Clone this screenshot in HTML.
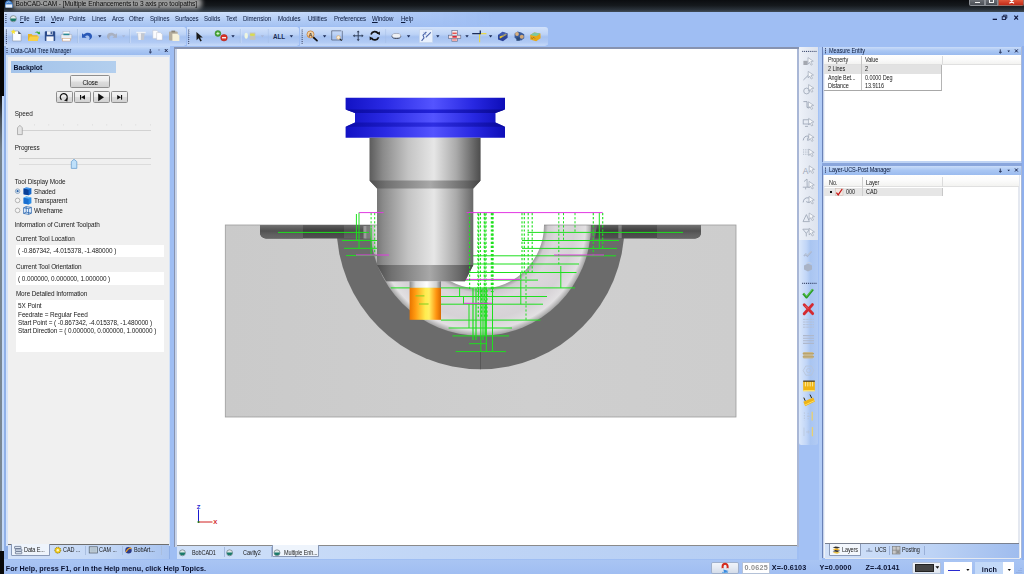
<!DOCTYPE html>
<html lang="en">
<head>
<meta charset="utf-8">
<title>BobCAD-CAM - [Multiple Enhancements to 3 axis pro toolpaths]</title>
<style>
*{box-sizing:border-box;margin:0;padding:0}
html,body{width:1024px;height:574px;overflow:hidden}
body{position:relative;background:#9fbef3;font-family:"Liberation Sans",sans-serif;font-size:6.5px;color:#111;line-height:1}
.a{position:absolute}
.t{position:absolute;white-space:nowrap;letter-spacing:-0.1px;filter:blur(.28px)}
/* title bar */
#title{left:0;top:0;width:1024px;height:11.700px;background:linear-gradient(#0b0d10 0,#15191d 45%,#2a323a 80%,#414c57 100%)}
#titletxt{left:15.500px;top:.8px;font-size:6.600px;letter-spacing:-0.09px;color:#0c0c0c}
#tglow{left:12px;top:-3px;width:190px;height:11.500px;border-radius:5px;background:#b4b4b4;filter:blur(2.200px);opacity:.85}
/* menu */
#menubar{left:4px;top:11.700px;width:1020px;height:14.800px;background:linear-gradient(90deg,rgba(159,190,243,0),rgba(159,190,243,0) 25%,#9fbef3 48%),linear-gradient(#cfe0fb,#b6cff6 55%,#a6c3f2)}
#menubar .t{top:4.600px;font-size:6.600px;color:#0c1a3c;display:inline-block;transform:scaleX(.93);transform-origin:0 50%}
#menubar u{text-decoration-thickness:.5px;text-underline-offset:.6px}
/* toolbar */
.tbg{background:linear-gradient(#d2e2fb,#bdd3f6 40%,#a6c2f1 55%,#b1caf4 85%,#c3d7f8);box-shadow:0 .6px 0 #e4eefc}
/* panels */
.phead{height:9px;background:linear-gradient(#c9dcf9,#a9c6f3 50%,#9bbbef);font-size:6.3px;color:#0c1a3c}
.phead .t{top:1.5px}
.b{font-weight:bold}
.f{margin-top:.6px;font-size:6.4px;letter-spacing:-0.09px;color:#1a1a1a}
.btn{border:.8px solid #8e8e8e;border-radius:1.6px;background:linear-gradient(#f4f4f4,#ebebeb 48%,#dddddd 52%,#d2d2d2)}
.h{font-size:6.400px;display:inline-block;transform:scaleX(.87);transform-origin:0 50%;color:#0c1a3c;top:1.100px}
.g{font-size:6.400px;display:inline-block;transform:scaleX(.86);transform-origin:0 50%;color:#1a1a1a}
.s{font-size:7.200px;font-weight:bold;color:#0a1230;letter-spacing:.12px}
.arr{width:4px;height:2.500px;background:#111;clip-path:polygon(0 0,100% 0,50% 100%)}
</style>
</head>
<body>
<!-- title bar -->
<div id="title" class="a"></div>
<div class="a" style="left:0;top:0;width:4px;height:96px;background:#050505"></div>
<div class="a" style="left:0;top:96px;width:1.5px;height:455px;background:linear-gradient(#111,#4a545e 5%,#76848f 12%,#7b8995)"></div>
<div class="a" style="left:1.5px;top:96px;width:2.5px;height:455px;background:#c3d9f8"></div>
<div class="a" style="left:0;top:551px;width:4px;height:23px;background:#0a0a0a"></div>
<div id="tglow" class="a"></div>
<div id="titletxt" class="t">BobCAD-CAM - [Multiple Enhancements to 3 axis pro toolpaths]</div>

<!-- menu bar -->
<div id="menubar" class="a">
<span class="t" style="left:16px"><u>F</u>ile</span>
<span class="t" style="left:31px"><u>E</u>dit</span>
<span class="t" style="left:47px"><u>V</u>iew</span>
<span class="t" style="left:65px">Points</span>
<span class="t" style="left:88px">Lines</span>
<span class="t" style="left:108px">Arcs</span>
<span class="t" style="left:125px">Other</span>
<span class="t" style="left:146px">Splines</span>
<span class="t" style="left:171px">Surfaces</span>
<span class="t" style="left:200px">Solids</span>
<span class="t" style="left:222px">Text</span>
<span class="t" style="left:239px">Dimension</span>
<span class="t" style="left:274px">Modules</span>
<span class="t" style="left:304px">Utilities</span>
<span class="t" style="left:330px">Preferences</span>
<span class="t" style="left:368px"><u>W</u>indow</span>
<span class="t" style="left:397px"><u>H</u>elp</span>
</div>

<!-- toolbar -->
<div class="a tbg" style="left:4px;top:26.6px;width:182px;height:18.2px;border-radius:0 2.5px 2.5px 0"></div>
<div class="a tbg" style="left:186.6px;top:26.6px;width:112.4px;height:18.2px;border-radius:0 2.5px 2.5px 0"></div>
<div class="a tbg" style="left:300px;top:26.6px;width:248px;height:18.2px;border-radius:0 3px 3px 0"></div>
<div class="a" style="left:418.8px;top:28.8px;width:14.4px;height:14.5px;background:#e9f1fd;border:.5px solid #c8d8f0;border-radius:1px"></div>
<svg class="a" style="left:0;top:26px" width="560" height="20" viewBox="0 26 560 20">
<rect x="5.9" y="29.6" width="1" height="1" fill="#1a2448"/><rect x="6.7" y="30.2" width=".7" height=".7" fill="#e8f0fc"/><rect x="5.9" y="31.5" width="1" height="1" fill="#1a2448"/><rect x="6.7" y="32.1" width=".7" height=".7" fill="#e8f0fc"/><rect x="5.9" y="33.4" width="1" height="1" fill="#1a2448"/><rect x="6.7" y="34.0" width=".7" height=".7" fill="#e8f0fc"/><rect x="5.9" y="35.3" width="1" height="1" fill="#1a2448"/><rect x="6.7" y="35.9" width=".7" height=".7" fill="#e8f0fc"/><rect x="5.9" y="37.2" width="1" height="1" fill="#1a2448"/><rect x="6.7" y="37.8" width=".7" height=".7" fill="#e8f0fc"/><rect x="5.9" y="39.1" width="1" height="1" fill="#1a2448"/><rect x="6.7" y="39.7" width=".7" height=".7" fill="#e8f0fc"/><rect x="5.9" y="41.0" width="1" height="1" fill="#1a2448"/><rect x="6.7" y="41.6" width=".7" height=".7" fill="#e8f0fc"/><rect x="5.9" y="42.9" width="1" height="1" fill="#1a2448"/><rect x="6.7" y="43.5" width=".7" height=".7" fill="#e8f0fc"/><rect x="188.3" y="29.6" width="1" height="1" fill="#1a2448"/><rect x="189.10000000000002" y="30.2" width=".7" height=".7" fill="#e8f0fc"/><rect x="188.3" y="31.5" width="1" height="1" fill="#1a2448"/><rect x="189.10000000000002" y="32.1" width=".7" height=".7" fill="#e8f0fc"/><rect x="188.3" y="33.4" width="1" height="1" fill="#1a2448"/><rect x="189.10000000000002" y="34.0" width=".7" height=".7" fill="#e8f0fc"/><rect x="188.3" y="35.3" width="1" height="1" fill="#1a2448"/><rect x="189.10000000000002" y="35.9" width=".7" height=".7" fill="#e8f0fc"/><rect x="188.3" y="37.2" width="1" height="1" fill="#1a2448"/><rect x="189.10000000000002" y="37.8" width=".7" height=".7" fill="#e8f0fc"/><rect x="188.3" y="39.1" width="1" height="1" fill="#1a2448"/><rect x="189.10000000000002" y="39.7" width=".7" height=".7" fill="#e8f0fc"/><rect x="188.3" y="41.0" width="1" height="1" fill="#1a2448"/><rect x="189.10000000000002" y="41.6" width=".7" height=".7" fill="#e8f0fc"/><rect x="188.3" y="42.9" width="1" height="1" fill="#1a2448"/><rect x="189.10000000000002" y="43.5" width=".7" height=".7" fill="#e8f0fc"/><rect x="301.7" y="29.6" width="1" height="1" fill="#1a2448"/><rect x="302.5" y="30.2" width=".7" height=".7" fill="#e8f0fc"/><rect x="301.7" y="31.5" width="1" height="1" fill="#1a2448"/><rect x="302.5" y="32.1" width=".7" height=".7" fill="#e8f0fc"/><rect x="301.7" y="33.4" width="1" height="1" fill="#1a2448"/><rect x="302.5" y="34.0" width=".7" height=".7" fill="#e8f0fc"/><rect x="301.7" y="35.3" width="1" height="1" fill="#1a2448"/><rect x="302.5" y="35.9" width=".7" height=".7" fill="#e8f0fc"/><rect x="301.7" y="37.2" width="1" height="1" fill="#1a2448"/><rect x="302.5" y="37.8" width=".7" height=".7" fill="#e8f0fc"/><rect x="301.7" y="39.1" width="1" height="1" fill="#1a2448"/><rect x="302.5" y="39.7" width=".7" height=".7" fill="#e8f0fc"/><rect x="301.7" y="41.0" width="1" height="1" fill="#1a2448"/><rect x="302.5" y="41.6" width=".7" height=".7" fill="#e8f0fc"/><rect x="301.7" y="42.9" width="1" height="1" fill="#1a2448"/><rect x="302.5" y="43.5" width=".7" height=".7" fill="#e8f0fc"/>
<!-- new -->
<path d="M12.6,31 h5.6 l3,3 v7 h-8.6 z" fill="#fafcff" stroke="#8894a8" stroke-width=".6"/><path d="M18.2,31 v3 h3 z" fill="#4a5468"/><path d="M13.4,29.2 l.8,1.6 l1.8,.2 l-1.3,1.2 l.3,1.8 l-1.6,-.9 l-1.6,.9 l.3,-1.8 l-1.3,-1.2 l1.8,-.2 z" fill="#f6e23a"/>
<!-- open -->
<path d="M28,34 h3.6 l1,1.2 h5 v5.6 h-9.6 z" fill="#e8b424"/><path d="M28,41 l2,-4.6 h9.2 l-1.8,4.6 z" fill="#f8d048"/><path d="M34.6,32.8 q2.4,-2 4.4,-.6 l.6,-1 l.6,3 l-3,-.2 l.9,-.8 q-1.4,-.9 -3.500,-.4 z" fill="#38a838"/>
<!-- save -->
<rect x="44.8" y="31.2" width="10.4" height="9.8" rx=".8" fill="#2c4c8c"/><rect x="47" y="31.2" width="5.6" height="3.6" fill="#e8eef8"/><rect x="50.6" y="31.6" width="1.3" height="2.6" fill="#2c4c8c"/><rect x="46.4" y="36.4" width="7.2" height="4.6" fill="#f4f6fa"/>
<!-- print -->
<rect x="63" y="31.4" width="6.8" height="3.4" fill="#fafafa" stroke="#a8b0c0" stroke-width=".5"/><rect x="61" y="34.4" width="10.8" height="4.6" rx=".8" fill="#e8ecf2" stroke="#98a0b0" stroke-width=".5"/><rect x="63.4" y="33.6" width="6" height="1.6" fill="#2a8a98"/><rect x="62.6" y="38.4" width="7.6" height="2.6" fill="#fff" stroke="#d8a070" stroke-width=".5"/>
<path d="M77.6,29 v14" stroke="#90acd8" stroke-width=".6"/><path d="M78.2,29 v14" stroke="#dce8fa" stroke-width=".6"/>
<!-- undo -->
<path d="M82,33.2 v4.600 h4.600 l-1.600,-1.500 q2.600,-1.600 4.200,.2 q1.200,1.600 -.4,3.500 q3.600,-1.200 3.200,-4.200 q-.8,-3.600 -5.200,-3 q-1.800,.4 -3.200,1.800 z" fill="#2a5ab8"/>
<path d="M98.1,35.3 h3.4 l-1.7,2.1 z" fill="#1a2a55"/>
<!-- redo disabled -->
<path d="M117,33.200 v4.600 h-4.600 l1.600,-1.500 q-2.600,-1.600 -4.200,.2 q-1.200,1.600 .4,3.500 q-3.600,-1.200 -3.200,-4.200 q.8,-3.600 5.200,-3 q1.800,.4 3.200,1.800 z" fill="#a9b1c2"/>
<path d="M121.89999999999999,35.3 h3.4 l-1.7,2.1 z" fill="#a8b8d8"/>
<path d="M129.700,29 v14" stroke="#90acd8" stroke-width=".6"/><path d="M130.300,29 v14" stroke="#dce8fa" stroke-width=".6"/>
<!-- trash disabled -->
<path d="M136.300,31.800 h9.400 v1.400 h-9.400 z" fill="#f0f2f6"/><path d="M137.300,33.200 h7.400 l-.8,6.800 h-5.800 z" fill="#c4c8d0"/><path d="M138,33.200 h3 l-.2,6.800 h-2.200 z" fill="#f2f2f4"/>
<!-- copy -->
<path d="M152.800,30.400 h4 l1.600,1.600 v6.400 h-5.600 z" fill="#fbfbfd" stroke="#b8bcc8" stroke-width=".4"/><path d="M156.600,32.600 h3.800 l2,2 v5.400 h-5.800 z" fill="#fdfdff" stroke="#b0b4c0" stroke-width=".4"/>
<!-- paste -->
<rect x="169" y="31.400" width="8.600" height="9" rx=".8" fill="#b4ac9c"/><rect x="171.400" y="30.600" width="3.800" height="1.800" fill="#8a8478"/><path d="M172.400,33.800 h5 l2,1.800 v5.400 h-7 z" fill="#f6f0d8"/>
<!-- select arrow -->
<path d="M196.400,32 l.2,8.200 l2,-2 l1.800,3.400 l1.400,-.8 l-1.800,-3.200 l2.800,-.2 z" fill="#1a1a1a"/>
<!-- plus/minus -->
<circle cx="217.900" cy="33.500" r="2.900" fill="#4aa83a" stroke="#2a7a22" stroke-width=".5"/><path d="M216.400,33.500 h3 M217.900,32 v3" stroke="#dff5d8" stroke-width=".9"/>
<circle cx="224" cy="37.700" r="3.300" fill="#d83428" stroke="#a81e18" stroke-width=".5"/><rect x="222" y="37.100" width="4" height="1.300" fill="#fff"/>
<path d="M231.3,35.3 h3.4 l-1.7,2.1 z" fill="#1a2a55"/>
<path d="M240.400,29 v14" stroke="#90acd8" stroke-width=".6"/><path d="M241,29 v14" stroke="#dce8fa" stroke-width=".6"/>
<ellipse cx="246.200" cy="35.800" rx="1.700" ry="3" fill="#eef6e0"/><rect x="249.800" y="32.600" width="5.600" height="7.200" fill="#c4c4bc"/><ellipse cx="252.400" cy="34.800" rx="2.600" ry="1.300" fill="#d8dc50"/>
<path d="M260.7,35.3 h3.4 l-1.7,2.1 z" fill="#a8b8d8"/>
<path d="M268.300,29 v14" stroke="#a4bce4" stroke-width=".5"/>
<text x="273" y="38.700" font-family="Liberation Sans,sans-serif" font-weight="bold" font-size="7.200" fill="#1a2a52" textLength="12.200" lengthAdjust="spacingAndGlyphs">ALL</text>
<path d="M289.7,35.3 h3.4 l-1.7,2.1 z" fill="#1a2a55"/>
<!-- zoom -->
<path d="M313,37 l4,3.600" stroke="#111" stroke-width="1.700" stroke-linecap="round"/><circle cx="310.500" cy="34.400" r="3.500" fill="#f2d2a8" stroke="#c88a48" stroke-width=".9"/><text x="308.600" y="36.500" font-family="Liberation Sans,sans-serif" font-weight="bold" font-size="5.600" fill="#5a3a18">A</text>
<path d="M322.90000000000003,35.3 h3.4 l-1.7,2.1 z" fill="#1a2a55"/>
<rect x="331.700" y="30.800" width="10.600" height="9.200" fill="none" stroke="#3a4660" stroke-width=".6" stroke-dasharray="9.600 1 30"/><circle cx="338.400" cy="37.400" r="1.900" fill="#f8ecd8" stroke="#d8a868" stroke-width=".6"/><path d="M339.800,38.800 l1.900,1.900" stroke="#222" stroke-width="1.100"/>
<!-- pan -->
<path d="M358.200,31.400 v8.800 M353.800,35.800 h8.800" stroke="#34435f" stroke-width="1"/><path d="M358.200,30.400 l1.500,1.900 h-3 z M358.200,41.200 l1.500,-1.900 h-3 z M352.800,35.800 l1.900,-1.500 v3 z M363.600,35.800 l-1.900,-1.500 v3 z" fill="#34435f"/>
<!-- rotate -->
<path d="M371,34.400 a4,4 0 0 1 7.200,-.8 M378.600,37.200 a4,4 0 0 1 -7.200,.8" fill="none" stroke="#111" stroke-width="1.700"/><path d="M376.600,33.400 l3.400,1.600 l-.2,-3.600 z M373,38.200 l-3.400,-1.600 l.2,3.600 z" fill="#111"/>
<path d="M385.600,29 v14" stroke="#a4bce4" stroke-width=".5"/>
<!-- ellipse -->
<ellipse cx="396.400" cy="36.200" rx="4.300" ry="2.200" fill="none" stroke="#2a3040" stroke-width="1"/><ellipse cx="396.400" cy="35.600" rx="4.300" ry="2.200" fill="#eef0f4" stroke="#aab0c0" stroke-width=".5"/>
<path d="M406.90000000000003,35.3 h3.4 l-1.7,2.1 z" fill="#1a2a55"/>
<!-- squiggle -->
<path d="M421.600,40.800 l2.400,-3 l-1,-2.600 l3.400,-3.200 M425.800,37.400 l5,-5" fill="none" stroke="#4a64a8" stroke-width="1.100"/><path d="M423.600,32.400 l2.800,2.600" stroke="#7a8ec8" stroke-width=".8"/>
<path d="M436.1,35.3 h3.4 l-1.7,2.1 z" fill="#1a2a55"/>
<!-- red grid -->
<rect x="451.900" y="30.600" width="5.400" height="11" fill="#fbecec" stroke="#5a6888" stroke-width=".6"/><rect x="448.600" y="35.200" width="12.200" height="3.400" fill="#f4dada" stroke="#5a6888" stroke-width=".6"/><rect x="452.400" y="32.600" width="4.400" height="1.300" fill="#e04848"/><rect x="452.400" y="36" width="4.400" height="1.700" fill="#d82838"/><rect x="452.400" y="39.400" width="4.400" height="1.100" fill="#e86868"/>
<path d="M465.3,35.3 h3.4 l-1.7,2.1 z" fill="#1a2a55"/>
<!-- cross -->
<path d="M479.600,34 v8.200 M480.400,33.600 h6" stroke="#e8d848" stroke-width="1.100"/><path d="M472.200,33.600 h8.600 M480.300,30.400 v3.800" stroke="#1c2c58" stroke-width="1.300"/>
<path d="M488.90000000000003,35.3 h3.4 l-1.7,2.1 z" fill="#1a2a55"/>
<!-- cam icons -->
<path d="M498,35 l4.600,-3.200 l5,1.600 v4.400 l-4.600,3.400 l-5,-1.800 z" fill="#2c4498"/><path d="M499.400,36.800 l6.600,-3.600 l.6,1.600 l-6.600,3.800 z" fill="#f0c828"/><path d="M498,35 l4.600,-3.200 l5,1.600 l-4.600,3 z" fill="#4a68c0" opacity=".6"/>
<path d="M514.600,33.400 l3,-2 l3.600,1 l3,1.800 v4 l-3,2.200 l-3.800,-.6 l-2.800,-2 z" fill="#3a5a98"/><circle cx="517" cy="34" r="1.900" fill="#d8b080"/><circle cx="521.800" cy="36.800" r="2" fill="#d0a878"/><path d="M516.400,37.400 h3.400 v3.400 h-3.400 z" fill="#284878"/>
<path d="M530.200,35 l4,-2.600 l6.200,1.200 l.2,4.600 l-4.400,3 l-6,-1.600 z" fill="#e8a818"/><path d="M530.200,35 l4,-2.600 l6.200,1.200 l-4.200,2.600 z" fill="#7cc8a0"/><path d="M531,37.600 l1.400,1 l1.200,-1.400 l1.400,1.400" stroke="#8a5a08" stroke-width=".6" fill="none"/>
</svg>
<!-- menu icon + mdi buttons -->
<svg class="a" style="left:4px;top:12px" width="14" height="14" viewBox="4 12 14 14">
<rect x="5.400" y="14" width="1" height="1" fill="#1a2448"/><rect x="5.400" y="16" width="1" height="1" fill="#1a2448"/><rect x="5.400" y="18" width="1" height="1" fill="#1a2448"/><rect x="5.400" y="20" width="1" height="1" fill="#1a2448"/><rect x="5.400" y="22" width="1" height="1" fill="#1a2448"/>
<circle cx="13.300" cy="18.700" r="3.100" fill="#e4ecec" stroke="#5a6a70" stroke-width=".6"/><path d="M10.400,18.400 a2.900,2.900 0 0 0 5.800,0 z" fill="#1a7a6a"/>
</svg>
<svg class="a" style="left:990px;top:13px" width="32" height="9" viewBox="990 13 32 9">
<rect x="992.700" y="18.700" width="4.300" height="1.300" fill="#101840"/>
<rect x="1002.200" y="16.700" width="3.400" height="2.800" fill="none" stroke="#101840" stroke-width=".9"/><path d="M1003.400,16.400 v-1.200 h3.400 v3 h-1" fill="none" stroke="#101840" stroke-width=".9"/>
<path d="M1014.300,15.600 l3.700,4 M1018,15.600 l-3.700,4" stroke="#101840" stroke-width="1.200"/>
</svg>
<!-- window buttons -->
<div class="a" style="left:969px;top:0;width:15.600px;height:6px;background:linear-gradient(#6a6e74,#4a4e55);border:.6px solid #8c9096;border-top:none;border-radius:0 0 0 2px"></div>
<div class="a" style="left:984.600px;top:0;width:13.700px;height:6px;background:linear-gradient(#6a6e74,#4a4e55);border:.6px solid #8c9096;border-top:none"></div>
<div class="a" style="left:998.300px;top:0;width:25.700px;height:6px;background:linear-gradient(#e2583c,#c22a18);border:.6px solid #9c6a60;border-top:none;border-radius:0 0 2px 0"></div>
<div class="a" style="left:975px;top:1.600px;width:5px;height:1.500px;background:#f4f4f4"></div>
<div class="a" style="left:989px;top:0;width:4.600px;height:3px;border:1px solid #f4f4f4;border-top:none"></div>
<svg class="a" style="left:1008px;top:0" width="8" height="5" viewBox="0 0 8 5"><path d="M1.500,-1 l4.400,4.400 M5.900,-1 l-4.400,4.400" stroke="#fff" stroke-width="1.300"/></svg>
<!-- app icon -->
<svg class="a" style="left:4px;top:0" width="10" height="9" viewBox="0 0 10 9"><path d="M1,3 q1,-3.500 4.500,-2.600 q3,1 3.300,4.600 v2.600 h-7.800 z" fill="#3a7ac8"/><path d="M1.600,4.400 h6.600 v3.200 h-6.600 z" fill="#e8f0fa"/><path d="M2.400,3 q1.600,-2 4,-.6" stroke="#c8e0fa" stroke-width=".8" fill="none"/></svg>
<!-- LEFT PANEL -->
<div id="lp" class="a" style="left:4px;top:46px;width:166px;height:513px;background:#8fb0e8"></div>
<div class="a phead" style="left:6px;top:46px;width:164px"><span class="t h" style="left:5px">Data-CAM Tree Manager</span></div>
<div class="a" style="left:6px;top:55px;width:164px;height:491px;background:#d5e3f7"></div>
<div id="lpc" class="a" style="left:8px;top:57px;width:160.5px;height:488px;background:#f0f0f0"></div>


<svg class="a" style="left:4px;top:46px" width="168" height="10" viewBox="4 46 168 10">
<g fill="#1a2448"><rect x="6.500" y="48" width="1" height="1"/><rect x="6.500" y="50" width="1" height="1"/><rect x="6.500" y="52" width="1" height="1"/></g>
<g stroke="#1a2448" fill="none" stroke-width=".8"><path d="M150.300,49 v2.600 M149,52 h2.800 M150.300,52 v1.600"/><path d="M164.800,49 l2.800,3 M167.600,49 l-2.800,3" stroke-width="1"/></g>
<path d="M157.800,49.600 h2.400 l-1.200,1.400 z" fill="#7a8ab0"/>
</svg>
<!-- left panel contents -->
<div class="a" style="left:11px;top:61.3px;width:104.5px;height:11.5px;background:linear-gradient(90deg,#a3c3ea,#b3cfee)"></div>
<span class="t b" style="left:13.5px;top:63.7px;font-size:7px;color:#0a1430">Backplot</span>
<div class="a btn" style="left:70.3px;top:75.3px;width:39.5px;height:12.6px"></div>
<span class="t" style="left:82.600px;top:80px;font-size:6.4px;letter-spacing:-0.25px">Close</span>
<div class="a btn" style="left:55.5px;top:91.200px;width:17px;height:11.700px"></div>
<div class="a btn" style="left:74.3px;top:91.200px;width:16.7px;height:11.700px"></div>
<div class="a btn" style="left:92.8px;top:91.200px;width:17px;height:11.700px"></div>
<div class="a btn" style="left:111.4px;top:91.200px;width:17px;height:11.700px"></div>
<svg class="a" style="left:55px;top:90px" width="75" height="15" viewBox="55 90 75 15">
<path d="M61.500,99.800 A3.500,3.500 0 1 1 66.300,99.500" fill="none" stroke="#111" stroke-width="1.150"/><path d="M67.800,98 L67.300,101.400 L64,100.600 Z" fill="#111"/>
<rect x="80" y="95" width="1.1" height="4.6" fill="#111"/><path d="M81,97.3 L85,95 V99.6 Z" fill="#111"/>
<path d="M98.2,93.4 L104,97.3 L98.2,101.2 Z" fill="#111"/>
<path d="M117.2,95 L121,97.3 L117.2,99.6 Z" fill="#111"/><rect x="121" y="95" width="1.1" height="4.6" fill="#111"/>
</svg>
<span class="t f" style="left:14.700px;top:110.200px">Speed</span>
<div class="a" style="left:22px;top:129.6px;width:129px;height:1.2px;background:#d2d2d2"></div>
<svg class="a" style="left:16px;top:123px" width="140" height="14" viewBox="16 123 140 14">
<g fill="#d9d9d9"><rect x="34" y="124" width=".6" height="1.6"/><rect x="48.5" y="124" width=".6" height="1.6"/><rect x="63" y="124" width=".6" height="1.6"/><rect x="77.5" y="124" width=".6" height="1.6"/><rect x="92" y="124" width=".6" height="1.6"/><rect x="106.5" y="124" width=".6" height="1.6"/><rect x="121" y="124" width=".6" height="1.6"/><rect x="135.5" y="124" width=".6" height="1.6"/><rect x="150" y="124" width=".6" height="1.6"/></g>
<path d="M17.5,134.6 V127.8 L19.9,125.3 L22.3,127.8 V134.6 Z" fill="#e4e4e4" stroke="#9a9a9a" stroke-width=".7"/>
</svg>
<span class="t f" style="left:14.7px;top:144px">Progress</span>
<div class="a" style="left:19.2px;top:158.1px;width:132.2px;height:1px;background:#cfcfcf"></div>
<div class="a" style="left:19.2px;top:163.5px;width:132.2px;height:1px;background:#dcdcdc"></div>
<svg class="a" style="left:70px;top:158px" width="9" height="12" viewBox="70 158 9 12"><path d="M71.3,168.4 V161.6 L74,159.3 L76.8,161.6 V168.4 Z" fill="#bfe0fa" stroke="#6b9fcf" stroke-width=".8"/></svg>
<span class="t f" style="left:14.7px;top:178.1px">Tool Display Mode</span>
<svg class="a" style="left:14px;top:186px" width="20" height="30" viewBox="14 186 20 30">
<circle cx="17.6" cy="191.2" r="2.3" fill="#e9f2fb" stroke="#6f8eb0" stroke-width=".7"/><circle cx="17.6" cy="191.2" r="1.1" fill="#2a62a8"/>
<circle cx="17.6" cy="200.4" r="2.3" fill="#f4f4f4" stroke="#9a9a9a" stroke-width=".7"/>
<circle cx="17.6" cy="210.4" r="2.3" fill="#f4f4f4" stroke="#9a9a9a" stroke-width=".7"/>
<path d="M23.6,188.6 L26.2,187.4 L31.4,188.2 V194 L28.6,195.2 L23.6,194.2 Z" fill="#1466c8"/><path d="M23.6,188.6 L28.6,189.4 V195.2 L23.6,194.2 Z" fill="#0a3f96"/><path d="M23.6,188.6 L26.2,187.4 L31.4,188.2 L28.6,189.4 Z" fill="#3f92ea"/>
<path d="M23.6,197.8 L26.2,196.6 L31.4,197.4 V203.2 L28.6,204.4 L23.6,203.4 Z" fill="#2a8ce6"/><path d="M23.6,197.8 L28.6,198.6 V204.4 L23.6,203.4 Z" fill="#1a6fd0"/><path d="M23.6,197.8 L26.2,196.6 L31.4,197.4 L28.6,198.6 Z" fill="#6ab8f6"/>
<path d="M23.6,207.8 L26.2,206.6 L31.4,207.4 V213.2 L28.6,214.4 L23.6,213.4 Z M23.6,207.8 L28.6,208.6 L31.4,207.4 M28.6,208.6 V214.4 M26.2,206.6 V212.2 L23.6,213.4 M26.2,212.2 L31.4,213.2" fill="#eaf4ff" stroke="#1a5aa8" stroke-width=".7"/>
</svg>
<span class="t f" style="left:34px;top:188.400px">Shaded</span>
<span class="t f" style="left:34px;top:197.1px">Transparent</span>
<span class="t f" style="left:34px;top:207.2px">Wireframe</span>
<span class="t f" style="left:14.5px;top:221.7px">Information of Current Toolpath</span>
<span class="t f" style="left:15.9px;top:235.2px">Current Tool Location</span>
<div class="a" style="left:15.9px;top:244.6px;width:148px;height:12.5px;background:#fff"></div>
<span class="t f" style="left:18.1px;top:247.4px">( -0.867342, -4.015378, -1.480000 )</span>
<span class="t f" style="left:15.9px;top:263px">Current Tool Orientation</span>
<div class="a" style="left:15.9px;top:272.4px;width:148px;height:12.6px;background:#fff"></div>
<span class="t f" style="left:18.1px;top:275.3px">( 0.000000, 0.000000, 1.000000 )</span>
<span class="t f" style="left:15.9px;top:290.3px">More Detailed Information</span>
<div class="a" style="left:15.9px;top:300.3px;width:148px;height:51.4px;background:#fff"></div>
<span class="t f" style="left:18.1px;top:302.9px">5X Point</span>
<span class="t f" style="left:18.1px;top:311.2px">Feedrate = Regular Feed</span>
<span class="t f" style="left:18.1px;top:319.6px">Start Point = ( -0.867342, -4.015378, -1.480000 )</span>
<span class="t f" style="left:18.1px;top:327.9px">Start Direction = ( 0.000000, 0.000000, 1.000000 )</span>

<!-- VIEWPORT -->
<div class="a" style="left:174px;top:47.300px;width:624.800px;height:499.300px;background:#8793b0"></div>
<div class="a" style="left:175px;top:48.600px;width:623.800px;height:498px;background:linear-gradient(90deg,#c9d5ea,#c9d5ea 99%,#a9b7d6 99.700%)"></div>
<div id="vp" class="a" style="left:177px;top:49.400px;width:619.700px;height:495.600px;background:#fff"></div>

<!--SCENE-->
<svg class="a" style="left:177px;top:48px" width="620" height="497" viewBox="177 48 620 497">
<defs>
<linearGradient id="gBlue" x1="0" x2="1" y1="0" y2="0"><stop offset="0" stop-color="#1212c4"/><stop offset=".25" stop-color="#2a2ae4"/><stop offset=".55" stop-color="#5454ff"/><stop offset=".8" stop-color="#2828e2"/><stop offset="1" stop-color="#0e0eb8"/></linearGradient>
<linearGradient id="gBlueD" x1="0" x2="1" y1="0" y2="0"><stop offset="0" stop-color="#0a0aa0"/><stop offset=".55" stop-color="#2222d8"/><stop offset="1" stop-color="#080890"/></linearGradient>
<linearGradient id="gGray" x1="0" x2="1" y1="0" y2="0"><stop offset="0" stop-color="#5c5c5c"/><stop offset=".12" stop-color="#8a8a8a"/><stop offset=".35" stop-color="#c4c4c4"/><stop offset=".58" stop-color="#e6e6e6"/><stop offset=".78" stop-color="#aaaaaa"/><stop offset=".92" stop-color="#6e6e6e"/><stop offset="1" stop-color="#4c4c4c"/></linearGradient>
<linearGradient id="gGrayD" x1="0" x2="1" y1="0" y2="0"><stop offset="0" stop-color="#4e4e4e"/><stop offset=".15" stop-color="#707070"/><stop offset=".55" stop-color="#a8a8a8"/><stop offset=".85" stop-color="#6a6a6a"/><stop offset="1" stop-color="#444"/></linearGradient>
<linearGradient id="gSilver" x1="0" x2="1" y1="0" y2="0"><stop offset="0" stop-color="#8a8a8a"/><stop offset=".2" stop-color="#e0e0e0"/><stop offset=".55" stop-color="#ffffff"/><stop offset=".85" stop-color="#d0d0d0"/><stop offset="1" stop-color="#777"/></linearGradient>
<linearGradient id="gOrange" x1="0" x2="1" y1="0" y2="0"><stop offset="0" stop-color="#e87400"/><stop offset=".18" stop-color="#ff9a10"/><stop offset=".5" stop-color="#ffec50"/><stop offset=".62" stop-color="#fff060"/><stop offset=".85" stop-color="#ff9410"/><stop offset="1" stop-color="#d86a00"/></linearGradient>
<linearGradient id="gBlock" x1="0" x2="1" y1="0" y2="0"><stop offset="0" stop-color="#cacaca"/><stop offset=".6" stop-color="#cfcfcf"/><stop offset="1" stop-color="#cdcdcd"/></linearGradient>
<radialGradient id="gBowl" gradientUnits="userSpaceOnUse" cx="480.5" cy="225.3" r="110.5"><stop offset="0.575" stop-color="#9c9c9c"/><stop offset="0.61" stop-color="#cfcbcf"/><stop offset="0.68" stop-color="#dcd8dc"/><stop offset="0.85" stop-color="#d6d2d6"/><stop offset="0.95" stop-color="#e2e0e2"/><stop offset="1" stop-color="#a4a4a4"/></radialGradient>
<linearGradient id="gSlot" x1="0" x2="0" y1="0" y2="1"><stop offset="0" stop-color="#fff" stop-opacity=".14"/><stop offset=".45" stop-color="#000" stop-opacity=".12"/><stop offset="1" stop-color="#fff" stop-opacity=".05"/></linearGradient>
<clipPath id="cpOut"><path d="M336.5,225.3 A144.0,144.0 0 0 0 624.5,225.3 Z"/></clipPath>
</defs>
<rect x="225.3" y="225" width="510.7" height="192" fill="url(#gBlock)" stroke="#9c9c9c" stroke-width=".8"/>
<path d="M336.5,225.3 A144.0,144.0 0 0 0 624.5,225.3 Z" fill="#6b6b6b"/>
<path d="M260,225 H701 V232.5 a6,6 0 0 1 -6,6 H266 a6,6 0 0 1 -6,-6 Z" fill="#454545"/>
<path d="M260,225 H303 V238.5 H266 a6,6 0 0 1 -6,-6 Z" fill="#5c5c5c"/>
<path d="M657,225 H701 V232.5 a6,6 0 0 1 -6,6 H657 Z" fill="#5c5c5c"/>
<rect x="618.3" y="225.3" width="3.4" height="13" fill="#7a7a7a"/>
<rect x="344" y="225.3" width="19.5" height="13.2" fill="#585858"/>
<path d="M260,225 H701 V232.5 a6,6 0 0 1 -6,6 H266 a6,6 0 0 1 -6,-6 Z" fill="url(#gSlot)"/>
<path d="M362.5,225.3 A118,118 0 0 0 597.0,225.3 Z" fill="#6b6b6b"/>
<rect x="363.5" y="226" width="3.2" height="12.5" fill="#9c9c9c"/><rect x="366.7" y="226" width="4" height="12.5" fill="#7c7c7c"/>
<path d="M370.0,225.3 A110.5,110.5 0 0 0 591.0,225.3 Z" fill="url(#gBowl)"/>
<path d="M417.0,223.3 V225.3 A63.5,63.5 0 0 0 544.0,225.3 V223.3 Z" fill="#fff"/>
<line x1="480.5" y1="335.8" x2="480.5" y2="369.3" stroke="#4a4a4a" stroke-width=".6"/>
<g id="toolpath">
<line x1="278" y1="232.4" x2="369" y2="232.4" stroke="#1fe01f" stroke-width="1.0"/>
<line x1="342" y1="240.5" x2="378" y2="240.5" stroke="#1fe01f" stroke-width="1.0"/>
<line x1="344" y1="248.3" x2="378" y2="248.3" stroke="#1fe01f" stroke-width="1.0"/>
<line x1="346" y1="255.6" x2="378" y2="255.6" stroke="#1fe01f" stroke-width="1.0"/>
<line x1="527.5" y1="232.4" x2="683" y2="232.4" stroke="#1fe01f" stroke-width="1.0"/>
<line x1="522" y1="240.5" x2="619" y2="240.5" stroke="#1fe01f" stroke-width="1.0"/>
<line x1="522" y1="248.4" x2="617" y2="248.4" stroke="#1fe01f" stroke-width="1.0"/>
<line x1="469" y1="255.8" x2="616" y2="255.8" stroke="#1fe01f" stroke-width="1.0"/>
<line x1="469" y1="264" x2="579" y2="264" stroke="#1fe01f" stroke-width="1.0"/>
<line x1="469" y1="272.5" x2="576.5" y2="272.5" stroke="#1fe01f" stroke-width="1.0"/>
<line x1="462" y1="280.1" x2="538" y2="280.1" stroke="#1fe01f" stroke-width="1.0"/>
<line x1="390.7" y1="287.9" x2="575" y2="287.9" stroke="#1fe01f" stroke-width="1.0"/>
<line x1="441" y1="296.5" x2="547" y2="296.5" stroke="#1fe01f" stroke-width="1.0"/>
<line x1="441" y1="304.2" x2="543" y2="304.2" stroke="#1fe01f" stroke-width="1.0"/>
<line x1="441" y1="320.1" x2="540.5" y2="320.1" stroke="#1fe01f" stroke-width="1.0"/>
<line x1="448.6" y1="328" x2="512" y2="328" stroke="#1fe01f" stroke-width="1.0"/>
<line x1="452.5" y1="335.9" x2="509" y2="335.9" stroke="#1fe01f" stroke-width="1.0"/>
<line x1="469" y1="343.7" x2="487" y2="343.7" stroke="#1fe01f" stroke-width="1.0"/>
<line x1="455.7" y1="351.6" x2="506" y2="351.6" stroke="#1fe01f" stroke-width="1.0"/>
<line x1="356.4" y1="214" x2="356.4" y2="240.5" stroke="#1fe01f" stroke-width="1.0"/>
<line x1="359" y1="212.5" x2="359" y2="248.3" stroke="#1fe01f" stroke-width="1.0"/>
<line x1="371.1" y1="213" x2="371.1" y2="228" stroke="#1fe01f" stroke-width="1.0" stroke-dasharray="2.2 1.9"/>
<line x1="371.1" y1="228" x2="371.1" y2="255" stroke="#1fe01f" stroke-width="1.0"/>
<line x1="374.7" y1="213" x2="374.7" y2="255" stroke="#1fe01f" stroke-width="1.0" stroke-dasharray="2.2 1.9"/>
<line x1="478" y1="213" x2="478" y2="292" stroke="#1fe01f" stroke-width="1.25" stroke-dasharray="2.2 1.9"/>
<line x1="480.4" y1="213" x2="480.4" y2="292" stroke="#1fe01f" stroke-width="1.25" stroke-dasharray="2.2 1.9"/>
<line x1="484.3" y1="213" x2="484.3" y2="292" stroke="#1fe01f" stroke-width="1.25" stroke-dasharray="2.2 1.9"/>
<line x1="486" y1="213" x2="486" y2="292" stroke="#1fe01f" stroke-width="1.25" stroke-dasharray="2.2 1.9"/>
<line x1="491.4" y1="213" x2="491.4" y2="292" stroke="#1fe01f" stroke-width="1.25" stroke-dasharray="2.2 1.9"/>
<line x1="493" y1="213" x2="493" y2="292" stroke="#1fe01f" stroke-width="1.25" stroke-dasharray="2.2 1.9"/>
<line x1="478.6" y1="214" x2="478.6" y2="300" stroke="#1fe01f" stroke-width="1.2" stroke-dasharray="2.2 1.9"/>
<line x1="485" y1="214" x2="485" y2="300" stroke="#1fe01f" stroke-width="1.2" stroke-dasharray="2.2 1.9"/>
<line x1="522" y1="213" x2="522" y2="272" stroke="#1fe01f" stroke-width="1.15" stroke-dasharray="2.2 1.9"/>
<line x1="524.3" y1="213" x2="524.3" y2="272" stroke="#1fe01f" stroke-width="1.15" stroke-dasharray="2.2 1.9"/>
<line x1="528.2" y1="213" x2="528.2" y2="272" stroke="#1fe01f" stroke-width="1.15" stroke-dasharray="2.2 1.9"/>
<line x1="532.2" y1="213" x2="532.2" y2="272" stroke="#1fe01f" stroke-width="1.15" stroke-dasharray="2.2 1.9"/>
<line x1="558.8" y1="213" x2="558.8" y2="266" stroke="#1fe01f" stroke-width="1.0" stroke-dasharray="2.2 1.9"/>
<line x1="563.5" y1="213" x2="563.5" y2="240" stroke="#1fe01f" stroke-width="1.0" stroke-dasharray="2.2 1.9"/>
<line x1="575" y1="213" x2="575" y2="232.4" stroke="#1fe01f" stroke-width="1.0" stroke-dasharray="2.2 1.9"/>
<line x1="593.3" y1="213" x2="593.3" y2="256" stroke="#1fe01f" stroke-width="1.15" stroke-dasharray="2.2 1.9"/>
<line x1="599.3" y1="213" x2="599.3" y2="248.4" stroke="#1fe01f" stroke-width="1.0"/>
<line x1="602.7" y1="213" x2="602.7" y2="248.4" stroke="#1fe01f" stroke-width="1.15" stroke-dasharray="2.2 1.9"/>
<line x1="459.6" y1="287.9" x2="459.6" y2="296.5" stroke="#1fe01f" stroke-width="1.0"/>
<line x1="463.5" y1="296.5" x2="463.5" y2="304.2" stroke="#1fe01f" stroke-width="1.0"/>
<line x1="469" y1="304.2" x2="469" y2="328" stroke="#1fe01f" stroke-width="1.0"/>
<line x1="473" y1="288" x2="473" y2="340" stroke="#1fe01f" stroke-width="1.2"/>
<line x1="476" y1="288" x2="476" y2="340" stroke="#1fe01f" stroke-width="1.2"/>
<line x1="480.8" y1="288" x2="480.8" y2="340" stroke="#1fe01f" stroke-width="1.2"/>
<line x1="483" y1="288" x2="483" y2="340" stroke="#1fe01f" stroke-width="1.2"/>
<line x1="486.3" y1="288" x2="486.3" y2="340" stroke="#1fe01f" stroke-width="1.2"/>
<line x1="478.3" y1="290" x2="478.3" y2="318" stroke="#1fe01f" stroke-width="1.3" stroke-dasharray="2.2 1.9"/>
<line x1="481.6" y1="290" x2="481.6" y2="318" stroke="#1fe01f" stroke-width="1.3" stroke-dasharray="2.2 1.9"/>
<line x1="484.6" y1="290" x2="484.6" y2="318" stroke="#1fe01f" stroke-width="1.3" stroke-dasharray="2.2 1.9"/>
<line x1="486.9" y1="290" x2="486.9" y2="318" stroke="#1fe01f" stroke-width="1.3" stroke-dasharray="2.2 1.9"/>
<line x1="492.5" y1="213" x2="492.5" y2="300" stroke="#1fe01f" stroke-width="1.25" stroke-dasharray="2.2 1.9"/>
<line x1="485.2" y1="300" x2="485.2" y2="336" stroke="#1fe01f" stroke-width="1.4"/>
<line x1="480.8" y1="340" x2="480.8" y2="351.6" stroke="#1fe01f" stroke-width="1.0"/>
<line x1="486.3" y1="340" x2="486.3" y2="351.6" stroke="#1fe01f" stroke-width="1.0"/>
<line x1="492.5" y1="288" x2="492.5" y2="351.6" stroke="#1fe01f" stroke-width="1.0"/>
<line x1="520.8" y1="272.5" x2="520.8" y2="304.2" stroke="#1fe01f" stroke-width="1.0"/>
<line x1="526" y1="272.5" x2="526" y2="320.1" stroke="#1fe01f" stroke-width="1.0" stroke-dasharray="2.2 1.9"/>
<line x1="560.8" y1="266" x2="560.8" y2="287.9" stroke="#1fe01f" stroke-width="1.0"/>
<line x1="359" y1="212.6" x2="383.5" y2="212.6" stroke="#e238e2" stroke-width="1.0"/>
<line x1="466.5" y1="212.6" x2="602.7" y2="212.6" stroke="#e238e2" stroke-width="1.0"/>
<line x1="356" y1="255" x2="389" y2="255" stroke="#e238e2" stroke-width="1.0"/>
<line x1="554" y1="255" x2="604" y2="255" stroke="#e238e2" stroke-width="1.0"/>
<line x1="466" y1="279.4" x2="521" y2="279.4" stroke="#e238e2" stroke-width="1.0"/>
<line x1="463.5" y1="303.3" x2="492" y2="303.3" stroke="#e238e2" stroke-width="1.0"/>
</g>
<g id="tool">
<path d="M345.6,97.8 H505 V109.5 L495.5,113 V122.6 L505,126.8 V137.7 H345.6 V126.8 L355,122.6 V113 L345.6,109.5 Z" fill="url(#gBlue)"/>
<path d="M345.6,109.5 L355,113 H495.5 L505,109.5 Z" fill="url(#gBlueD)"/>
<path d="M355,122.6 H495.5 L505,126.8 H345.6 Z" fill="url(#gBlueD)" opacity=".75"/>
<path d="M369.5,137.7 H480.6 V180.5 L473.3,188.5 V265 L465,281.3 H386 L377,265 V188.5 L369.5,180.5 Z" fill="url(#gGray)"/>
<path d="M369.5,180.5 H480.6 L473.3,188.5 H377 Z" fill="url(#gGrayD)"/>
<path d="M377,265 H473.3 L465,281.3 H386 Z" fill="url(#gGrayD)"/>
<rect x="409.6" y="281.3" width="31.4" height="6.6" fill="url(#gSilver)"/>
<rect x="409.6" y="287.8" width="31.4" height="32" fill="url(#gOrange)"/>
<line x1="415.5" y1="295.9" x2="424.4" y2="295.9" stroke="#7fd020" stroke-width="1.0"/>
<line x1="419" y1="304" x2="428.6" y2="304" stroke="#7fd020" stroke-width="1.0"/>
</g>
<line x1="377" y1="212.6" x2="383.5" y2="212.6" stroke="#e238e2" stroke-width="1.0"/>
<line x1="466.5" y1="212.6" x2="474" y2="212.6" stroke="#e238e2" stroke-width="1.0"/>
<line x1="377" y1="255" x2="389" y2="255" stroke="#e238e2" stroke-width="1.0"/>
<line x1="469.6" y1="213" x2="469.6" y2="290" stroke="#1fe01f" stroke-width="1.2" stroke-dasharray="2.2 1.9"/>
<g id="triad"><line x1="198.5" y1="522" x2="198.5" y2="509.5" stroke="#1a1ad0" stroke-width="1"/><line x1="198" y1="522" x2="212.5" y2="522" stroke="#d02020" stroke-width="1"/><circle cx="198.5" cy="522" r="1.1" fill="#208020"/>
<text x="196.8" y="508.6" font-family="Liberation Sans,sans-serif" font-size="6" font-weight="bold" fill="#1a1ad0">Z</text><text x="213.3" y="524" font-family="Liberation Sans,sans-serif" font-size="6" font-weight="bold" fill="#d02020">X</text></g>
</svg>
<!--/SCENE-->
<!-- right vertical toolbar -->
<div class="a" style="left:799px;top:47px;width:20px;height:512.500px;background:#a3c1f4"></div><div class="a" style="left:819px;top:47px;width:2.800px;height:512.500px;background:#b2ccf6"></div>
<div class="a" style="left:799.400px;top:47px;width:19px;height:193px;background:linear-gradient(90deg,#eef2f9,#e4e9f2 50%,#dde3ee)"></div>
<div class="a" style="left:799.400px;top:240px;width:19px;height:205px;border-radius:0 0 2.500px 2.500px;background:linear-gradient(90deg,#dbe8fb,#c0d5f7 40%,#a9c5f1 60%,#b2cbf4)"></div>
<svg class="a" style="left:798px;top:46px" width="22" height="400" viewBox="798 46 22 400">
<rect x="802.2" y="50.900" width="1" height="1" fill="#2a3860"/><rect x="804.1" y="50.900" width="1" height="1" fill="#2a3860"/><rect x="806.0" y="50.900" width="1" height="1" fill="#2a3860"/><rect x="807.9" y="50.900" width="1" height="1" fill="#2a3860"/><rect x="809.8" y="50.900" width="1" height="1" fill="#2a3860"/><rect x="811.7" y="50.900" width="1" height="1" fill="#2a3860"/><rect x="813.6" y="50.900" width="1" height="1" fill="#2a3860"/><rect x="815.5" y="50.900" width="1" height="1" fill="#2a3860"/>
<rect x="803.400" y="60.800" width="4.200" height="4.200" fill="#a4a8b0"/><path d="M808.0,57.6 l5.300,3.600 l-2.500,.4 l1.500,2.900 l-1.300,.7 l-1.500,-2.900 l-1.500,1.900 z" fill="#f6f8fb" stroke="#9aa4b4" stroke-width=".65"/><path d="M803.400,80 l6.400,-6.200" stroke="#9aa4b4" stroke-width=".9"/><path d="M808.2,71.4 l5.300,3.600 l-2.500,.4 l1.500,2.900 l-1.300,.7 l-1.500,-2.900 l-1.500,1.900 z" fill="#f6f8fb" stroke="#9aa4b4" stroke-width=".65"/><circle cx="806.600" cy="91" r="2.900" fill="none" stroke="#9aa4b4" stroke-width=".8"/><path d="M808.6,84.6 l5.300,3.600 l-2.500,.4 l1.500,2.900 l-1.300,.7 l-1.500,-2.900 l-1.500,1.900 z" fill="#f6f8fb" stroke="#9aa4b4" stroke-width=".65"/><path d="M803.400,101.600 h3.600 v5.800 h3.600" fill="none" stroke="#9aa4b4" stroke-width=".9"/><path d="M808.4,101.8 l5.300,3.600 l-2.500,.4 l1.500,2.900 l-1.300,.7 l-1.500,-2.900 l-1.500,1.900 z" fill="#f6f8fb" stroke="#9aa4b4" stroke-width=".65"/><rect x="803.200" y="119.800" width="6.400" height="4.200" fill="none" stroke="#9aa4b4" stroke-width=".8"/><path d="M805,126.400 h3" stroke="#9aa4b4" stroke-width=".8"/><path d="M808.6,118.4 l5.300,3.600 l-2.500,.4 l1.500,2.900 l-1.300,.7 l-1.500,-2.900 l-1.500,1.900 z" fill="#f6f8fb" stroke="#9aa4b4" stroke-width=".65"/><path d="M803.200,140.400 q.6,-5.200 6,-4.200 q-2.400,2.200 -1.400,4.600" fill="none" stroke="#9aa4b4" stroke-width=".9"/><path d="M808.8,133.8 l5.300,3.600 l-2.500,.4 l1.500,2.900 l-1.300,.7 l-1.500,-2.900 l-1.500,1.900 z" fill="#f6f8fb" stroke="#9aa4b4" stroke-width=".65"/><rect x="803.2" y="149.4" width=".9" height=".9" fill="#9aa4b4"/><rect x="803.2" y="151.6" width=".9" height=".9" fill="#9aa4b4"/><rect x="803.2" y="153.8" width=".9" height=".9" fill="#9aa4b4"/><rect x="805.4" y="149.4" width=".9" height=".9" fill="#9aa4b4"/><rect x="805.4" y="151.6" width=".9" height=".9" fill="#9aa4b4"/><rect x="805.4" y="153.8" width=".9" height=".9" fill="#9aa4b4"/><rect x="807.6" y="149.4" width=".9" height=".9" fill="#9aa4b4"/><rect x="807.6" y="151.6" width=".9" height=".9" fill="#9aa4b4"/><rect x="807.6" y="153.8" width=".9" height=".9" fill="#9aa4b4"/><path d="M808.8,149.0 l5.300,3.600 l-2.500,.4 l1.500,2.900 l-1.300,.7 l-1.500,-2.900 l-1.500,1.900 z" fill="#f6f8fb" stroke="#9aa4b4" stroke-width=".65"/><text x="802.800" y="174.400" font-family="Liberation Sans,sans-serif" font-size="8.400" fill="#9aa4b4">A</text><path d="M809.2,165.8 l5.300,3.600 l-2.500,.4 l1.500,2.900 l-1.300,.7 l-1.500,-2.900 l-1.500,1.900 z" fill="#f6f8fb" stroke="#9aa4b4" stroke-width=".65"/><path d="M804,181.600 l3,-2.600 l.2,8.200 M802.800,187.200 h6.400 M805.600,189.400 v-2" fill="none" stroke="#9aa4b4" stroke-width=".8"/><path d="M809.0,181.4 l5.300,3.600 l-2.500,.4 l1.500,2.900 l-1.300,.7 l-1.500,-2.900 l-1.500,1.900 z" fill="#f6f8fb" stroke="#9aa4b4" stroke-width=".65"/><path d="M803.200,202.400 q.4,-5 5.200,-4.600 q2.600,.8 1.400,3.600 q-1.600,2 -3.600,.2" fill="none" stroke="#9aa4b4" stroke-width=".9"/><path d="M809.0,196.4 l5.300,3.600 l-2.500,.4 l1.500,2.900 l-1.300,.7 l-1.500,-2.900 l-1.500,1.900 z" fill="#f6f8fb" stroke="#9aa4b4" stroke-width=".65"/><path d="M803,221.600 l3.400,-7 l3,7 z" fill="none" stroke="#9aa4b4" stroke-width=".8"/><path d="M809.2,213.0 l5.300,3.600 l-2.500,.4 l1.500,2.900 l-1.300,.7 l-1.500,-2.900 l-1.500,1.900 z" fill="#f6f8fb" stroke="#9aa4b4" stroke-width=".65"/><path d="M802.800,229.200 h7 l-3.500,4.200 z M806.300,233.400 v3" fill="none" stroke="#9aa4b4" stroke-width=".8"/><path d="M809.2,228.4 l5.300,3.600 l-2.500,.4 l1.500,2.900 l-1.300,.7 l-1.500,-2.900 l-1.500,1.900 z" fill="#f6f8fb" stroke="#9aa4b4" stroke-width=".65"/>

<!-- disabled wrench / cube -->
<path d="M804,256 l1.800,-1.800 l1.600,1.800 l4,-4.600" fill="none" stroke="#a8b4cc" stroke-width="1.700"/><path d="M804.400,255.200 l1.600,-1.400 l1.400,1.600 l3.600,-4.200" fill="none" stroke="#c4d4e8" stroke-width=".7"/>
<path d="M804,265.600 l4,-2 l4,2 v4 l-4,2 l-4,-2 z" fill="#a9b3c6"/><path d="M806,263.600 l3,-1.400 l2.600,1.400" fill="none" stroke="#c8d0e0" stroke-width=".8"/>
<rect x="802.2" y="282.800" width="1" height="1" fill="#1a2448"/><rect x="804.1" y="282.800" width="1" height="1" fill="#1a2448"/><rect x="806.0" y="282.800" width="1" height="1" fill="#1a2448"/><rect x="807.9" y="282.800" width="1" height="1" fill="#1a2448"/><rect x="809.8" y="282.800" width="1" height="1" fill="#1a2448"/><rect x="811.7" y="282.800" width="1" height="1" fill="#1a2448"/><rect x="813.6" y="282.800" width="1" height="1" fill="#1a2448"/><rect x="815.5" y="282.800" width="1" height="1" fill="#1a2448"/>
<!-- green check -->
<path d="M803.200,293.400 l3.400,4 l6.400,-8" fill="none" stroke="#2a9a28" stroke-width="2.300" stroke-linejoin="round"/><path d="M803.600,293 l3,3.400 l6,-7.400" fill="none" stroke="#6ed85a" stroke-width=".8"/>
<!-- red x -->
<path d="M804.200,304.800 l8.400,8.800 M812.400,304.600 l-8.200,9.200" stroke="#d42a30" stroke-width="2.900" stroke-linecap="round"/><path d="M805,305.600 l3,3" stroke="#f07a78" stroke-width=".8"/>
<!-- disabled line icons -->
<g stroke="#b4bfd4" stroke-width=".9"><path d="M803,319.400 h11 M803,322 h11 M803,324.600 h11 M803,327.200 h11" stroke-dasharray="2.600 .6"/></g>
<g stroke="#aeb8cc" stroke-width="1.100"><path d="M803,335.600 h11 M803,338.200 h11 M803,340.800 h11 M803,343.400 h11"/></g>
<path d="M803.600,352 h9 l1.600,1.600 l-1.600,1.600 l1.600,1.600 l-1.600,1.600 h-9 l-1.200,-1.600 l1.200,-1.600 l-1.200,-1.600 z" fill="#c8b890"/><path d="M803,353.600 h11 M803,356.800 h11" stroke="#b09858" stroke-width=".7"/>
<path d="M805.800,366 h5.800 l2,4.600 l-2,4.600 h-5.800 l-2.600,-4.600 z" fill="none" stroke="#b8c4d8" stroke-width=".8"/><circle cx="808.600" cy="370.600" r="2.100" fill="none" stroke="#b8c4d8" stroke-width=".8"/>
<!-- yellow comb -->
<rect x="803.200" y="381.400" width="11.600" height="9.600" fill="#f0b414"/><path d="M805.400,381.400 v5 M807.800,381.400 v5 M810.200,381.400 v5 M812.600,381.400 v5" stroke="#fff0a8" stroke-width=".9"/><rect x="803.200" y="380.600" width="11.600" height="1.100" fill="#3a2a08"/><rect x="803.200" y="390" width="11.600" height="1.400" fill="#fae070"/>
<!-- yellow brush -->
<path d="M803.400,401.800 l9.800,-4.400 l1.800,4.200 l-9.800,4.600 z" fill="#f0b414"/><path d="M803.800,397.600 l1.400,3.200 M810,394.600 l1.600,3.400" stroke="#2a2208" stroke-width="1"/><path d="M805,405 l9.600,-4.400" stroke="#fae070" stroke-width=".9"/>
<!-- disabled yellow small -->
<path d="M804.400,412.400 v8 M808.200,412.800 v7" stroke="#b8c4d8" stroke-width=".8" stroke-dasharray="1.400 1.200"/><path d="M812.200,411.800 v8.800" stroke="#e8d070" stroke-width="1.300"/><path d="M807,416.400 h3" stroke="#b8c4d8" stroke-width=".7"/>
<path d="M804,427.600 v8.400" stroke="#b8c4d8" stroke-width=".7"/><path d="M806,432 h4 M808.400,430.400 v3.200" stroke="#b8c4d8" stroke-width=".7"/><path d="M812.400,427.200 v9" stroke="#e8d070" stroke-width="1.300"/>

</svg>
<!-- RIGHT PANELS -->
<div class="a" style="left:1021.500px;top:46px;width:2.500px;height:513.500px;background:#8fb0ee"></div><div class="a" style="left:822px;top:162.500px;width:199.500px;height:3.300px;background:#8aa6dc"></div><div class="a" style="left:822px;top:46.600px;width:199.500px;height:115.900px;background:linear-gradient(90deg,#6a82b8,#6a82b8 1.300px,#c4d2ea 1.400px,#fff 3px,#fff 198.600px,#a8b8d8 198.900px)"></div>
<div class="a phead" style="left:823.300px;top:46.500px;width:198.200px;height:8.500px"><span class="t h" style="left:6px">Measure Entity</span></div>
<div class="a" style="left:825px;top:55px;width:195.900px;height:106px;background:#fff"></div><div class="a" style="left:823.300px;top:161px;width:198px;height:1.500px;background:#c0d4f4"></div>
<div class="a" style="left:824px;top:55px;width:196.5px;height:9.600px;background:linear-gradient(#fff,#fbfbfb 50%,#f3f3f1);border-bottom:.6px solid #e0e0e0"></div>
<div class="a" style="left:824px;top:64.8px;width:117.5px;height:9.2px;background:#e2e2e2"></div>
<div class="a" style="left:824px;top:64.6px;width:118px;height:26px;border-right:.8px solid #b4b4b4;border-bottom:.8px solid #a8a8a8"></div>
<div class="a" style="left:861px;top:56px;width:.8px;height:34.3px;background:#c4c4c4"></div>
<div class="a" style="left:941.6px;top:56px;width:.6px;height:8px;background:#dcdcdc"></div>
<span class="t g" style="left:828px;top:56.800px">Property</span><span class="t g" style="left:865px;top:56.800px">Value</span>
<span class="t g" style="left:828px;top:66.200px">2 Lines</span><span class="t g" style="left:865px;top:66.200px">2</span>
<span class="t g" style="left:828px;top:74.700px">Angle Bet...</span><span class="t g" style="left:865px;top:74.700px">0.0000 Deg</span>
<span class="t g" style="left:828px;top:83.400px">Distance</span><span class="t g" style="left:865px;top:83.400px">13.9116</span>

<div class="a" style="left:822px;top:165.900px;width:199.500px;height:392.600px;background:linear-gradient(90deg,#6a82b8,#6a82b8 1.300px,#c4d2ea 1.400px,#fff 3px,#fff 198.600px,#a8b8d8 198.900px)"></div>
<div class="a phead" style="left:823.300px;top:165.800px;width:198.200px;height:8.800px"><span class="t h" style="left:6px">Layer-UCS-Post Manager</span></div>
<div class="a" style="left:825px;top:174.600px;width:195.300px;height:384.200px;background:#e4e8f0"></div><div class="a" style="left:825px;top:174.600px;width:193.300px;height:368.700px;background:#fff"></div>
<div class="a" style="left:824px;top:175px;width:194.500px;height:12.300px;background:linear-gradient(#fff,#fbfbfb 50%,#f3f3f1);border-bottom:.6px solid #e0e0e0"></div>
<div class="a" style="left:824px;top:187.5px;width:118.5px;height:8.8px;background:#e6e6e6;border-right:.8px solid #c8c8c8"></div>
<div class="a" style="left:862.2px;top:177px;width:.8px;height:19.3px;background:#cfcfcf"></div>
<div class="a" style="left:942.4px;top:177px;width:.6px;height:10px;background:#dcdcdc"></div>
<span class="t g" style="left:828.8px;top:179.700px">No.</span><span class="t g" style="left:865.9px;top:179.700px">Layer</span>
<div class="a" style="left:829.6px;top:191.2px;width:2.2px;height:2.2px;background:#111"></div>
<svg class="a" style="left:834.5px;top:188px" width="9" height="8" viewBox="0 0 9 8"><rect x=".4" y=".6" width="7.6" height="7" fill="#f2e6e0" stroke="#c8b8b0" stroke-width=".5"/><path d="M1.4,4.6 L3.2,6.8 L7.2,1" fill="none" stroke="#c81818" stroke-width="1.3"/></svg>
<span class="t g" style="left:845.5px;top:189.2px">000</span><span class="t g" style="left:865.9px;top:189.2px">CAD</span>
<svg class="a" style="left:823px;top:46px" width="200" height="130" viewBox="823 46 200 130">
<g fill="#1a2448"><rect x="825" y="48.300" width="1" height="1"/><rect x="825" y="50.300" width="1" height="1"/><rect x="825" y="52.300" width="1" height="1"/>
<rect x="825" y="167.600" width="1" height="1"/><rect x="825" y="169.600" width="1" height="1"/><rect x="825" y="171.600" width="1" height="1"/></g>
<g stroke="#1a2448" fill="none" stroke-width=".8"><path d="M1000.300,49.400 v2.600 M999,52.300 h2.800 M1000.300,52.300 v1.400"/><path d="M1015,49.400 l2.800,3 M1017.800,49.400 l-2.800,3" stroke-width="1"/>
<path d="M1000.300,168.500 v2.600 M999,171.400 h2.800 M1000.300,171.400 v1.400"/><path d="M1015,168.500 l2.800,3 M1017.800,168.500 l-2.800,3" stroke-width="1"/></g>
<path d="M1007.400,50.600 h2.600 l-1.300,1.600 z M1007.400,169.700 h2.600 l-1.300,1.600 z" fill="#1a2448"/>
</svg>
<!-- right panel tabs -->
<div class="a" style="left:825px;top:543.300px;width:193.600px;height:14.400px;background:linear-gradient(90deg,#d3e2f9,#bdd3f5 55%,#9fbcee);border-top:1px solid #7a8190"></div>
<div class="a" style="left:829px;top:544px;width:32.3px;height:12.4px;background:#f3f7fd;border:.7px solid #8a9ab8;border-top:none;border-radius:0 0 1.5px 1.5px"></div>
<svg class="a" style="left:831px;top:545px" width="72" height="11" viewBox="831 545 72 11">
<path d="M832.6,551.2 l3,-1.2 l4.6,.8 l-3,1.3 z" fill="#222"/><path d="M832.6,549.4 l3,-1.2 l4.6,.8 l-3,1.3 z" fill="#f0b020"/><path d="M832.6,547.6 l3,-1.2 l4.6,.8 l-3,1.3 z" fill="#303030"/><path d="M832.6,552.8 l3,-1.1 l4.6,.8 l-3,1.2 z" fill="#e8c040"/>
<path d="M866,551 h3 M869,548 v3.2 h3.4" fill="none" stroke="#6a7a98" stroke-width=".8"/>
<rect x="892.4" y="546.4" width="7.6" height="7.6" fill="#c8c8c8" stroke="#777" stroke-width=".6"/><path d="M892.4,550.2 h7.6 M896.2,546.4 v7.6" stroke="#777" stroke-width=".6"/><rect x="896.6" y="550.6" width="3" height="3" fill="#909090"/>
</svg>
<span class="t g" style="left:841.7px;top:547.4px">Layers</span>
<span class="t g" style="left:874.5px;top:547.4px">UCS</span>
<span class="t g" style="left:901.6px;top:547.4px">Posting</span>
<div class="a" style="left:888.7px;top:546px;width:.7px;height:9px;background:#9ab0d8"></div>
<div class="a" style="left:923.6px;top:546px;width:.7px;height:9px;background:#9ab0d8"></div>

<!-- left panel tabs -->
<div class="a" style="left:8px;top:544px;width:160.5px;height:14.8px;background:linear-gradient(90deg,#d5e3f9,#c4d8f6 60%,#a9c4f0);border-top:.8px solid #6e6e6e"></div>
<div class="a" style="left:10.7px;top:544.4px;width:39.6px;height:11.6px;background:#eef4fc;border:.7px solid #8a9ab8;border-top:none;border-radius:0 0 1.5px 1.5px"></div>
<svg class="a" style="left:12px;top:545px" width="130" height="11" viewBox="12 545 130 11">
<g fill="#dfe8f4" stroke="#3a4a68" stroke-width=".6"><rect x="14.6" y="546.4" width="6.4" height="2.2" rx=".5"/><rect x="15.4" y="549" width="6.4" height="2.2" rx=".5"/><rect x="15.4" y="551.6" width="6.4" height="2.2" rx=".5"/></g>
<circle cx="57.8" cy="550.2" r="3" fill="#f0c818" stroke="#6a5a10" stroke-width=".7" stroke-dasharray="1.2 .8"/><circle cx="57.8" cy="550.2" r="1.2" fill="#fff6c0"/>
<rect x="89.2" y="546.8" width="8.4" height="6.2" fill="#c9d3dc" stroke="#4a5a68" stroke-width=".7"/><rect x="90.4" y="548" width="6" height="3.8" fill="#b4c4d0"/>
<circle cx="128.5" cy="550.2" r="3.2" fill="#2a3a88"/><path d="M126,552 q2.5,-5 5.4,-3.4" stroke="#f0a020" stroke-width="1.2" fill="none"/>
</svg>
<span class="t g" style="left:23.8px;top:547.4px">Data E...</span>
<span class="t g" style="left:63.4px;top:547.4px">CAD ...</span>
<span class="t g" style="left:99px;top:547.4px">CAM ...</span>
<span class="t g" style="left:133.8px;top:547.4px">BobArt...</span>
<div class="a" style="left:85.4px;top:546px;width:.7px;height:9px;background:#a9bedf"></div>
<div class="a" style="left:121.5px;top:546px;width:.7px;height:9px;background:#a9bedf"></div>
<div class="a" style="left:160.8px;top:546px;width:.7px;height:9px;background:#a9bedf"></div>

<!-- viewport tabs -->
<div class="a" style="left:177px;top:545px;width:620px;height:14px;background:linear-gradient(90deg,#cfe0f9,#c1d6f6 40%,#b3ccf3);border-top:.8px solid #8a8a8a"></div>
<div class="a" style="left:272px;top:545.4px;width:47.4px;height:12px;background:#eef4fc;border:.7px solid #8a9ab8;border-top:none;border-radius:0 0 1.5px 1.5px"></div>
<svg class="a" style="left:177px;top:548px" width="104" height="10" viewBox="180 548 104 10">
<g id="bc"><circle cx="185.4" cy="552.8" r="3" fill="#dfe9e8" stroke="#5a6a70" stroke-width=".6"/><path d="M182.6,552.4 a2.8,2.8 0 0 0 5.6,0 z" fill="#1a7a6a"/></g>
<use href="#bc" x="47.2"/><use href="#bc" x="94.6"/>
</svg>
<span class="t g" style="left:192.4px;top:549.8px">BobCAD1</span>
<span class="t g" style="left:243.2px;top:549.8px">Cavity2</span>
<span class="t g" style="left:283.6px;top:549.8px">Multiple Enh...</span>
<div class="a" style="left:223.7px;top:547px;width:.7px;height:10px;background:#a3b9dd"></div>
<div class="a" style="left:270.5px;top:547px;width:.7px;height:10px;background:#a3b9dd"></div>

<!-- STATUS BAR -->
<div id="status" class="a" style="left:4px;top:559.5px;width:1020px;height:14.5px;background:linear-gradient(#a9c5f3,#a0bef2)"></div>
<span class="t s" style="left:5.800px;top:564.600px;letter-spacing:0.04px">For Help, press F1, or in the Help menu, click Help Topics.</span>
<div class="a" style="left:710.600px;top:562px;width:28.400px;height:12px;background:linear-gradient(#f0f4fa,#e4eaf3 50%,#d4dce9);border:.7px solid #9fb0cc;border-radius:1.800px"></div>
<svg class="a" style="left:719px;top:561px" width="14" height="13" viewBox="0 0 14 13"><path d="M3.600,7.600 V5.200 A2.500,2.500 0 0 1 8.600,5.200 V7.600" fill="none" stroke="#d42a1c" stroke-width="2"/><rect x="2.600" y="7.200" width="2" height="1.500" fill="#e4e4e4"/><rect x="7.600" y="7.200" width="2" height="1.500" fill="#e4e4e4"/><path d="M4.400,8.600 l5.200,1.400 l-4.400,2 z" fill="#3a8ae0"/><path d="M3,11.400 h6" stroke="#4aa0e8" stroke-width=".8"/></svg>
<div class="a" style="left:742px;top:562.3px;width:27.8px;height:11.7px;background:#fff;border:.6px solid #b4c2d8"></div>
<span class="t s" style="left:744.600px;top:564.100px;color:#8e8e8e;letter-spacing:.25px">0.0625</span>
<span class="t s" style="left:771.8px;top:564.1px">X=-0.6103</span>
<span class="t s" style="left:819.6px;top:564.1px">Y=0.0000</span>
<span class="t s" style="left:865.6px;top:564.1px">Z=-4.0141</span>
<div class="a" style="left:912px;top:562.3px;width:29px;height:11.7px;background:linear-gradient(#f1f4f9,#dfe6f0);border:.6px solid #b4c2d8;border-radius:1.5px"></div>
<div class="a" style="left:915px;top:564.2px;width:18.6px;height:7.5px;background:#454545;border:.6px solid #222"></div>
<div class="a arr" style="left:935.400px;top:566.300px"></div>
<div class="a" style="left:943.8px;top:562.3px;width:28.2px;height:11.7px;background:#fff"></div>
<div class="a" style="left:947.8px;top:569.6px;width:11.8px;height:1.1px;background:#2a2ad0"></div>
<div class="a arr" style="left:965.900px;top:568.600px"></div>
<div class="a" style="left:974.6px;top:562.3px;width:28.8px;height:11.7px;background:#c3d9f8"></div>
<span class="t s" style="left:981.8px;top:565.8px">inch</span>
<div class="a" style="left:1003.400px;top:562.300px;width:10.800px;height:11.700px;background:#fff"></div><div class="a arr" style="left:1007.300px;top:568.600px"></div><svg class="a" style="left:1016px;top:568px" width="7" height="6" viewBox="0 0 7 6"><g fill="#8aa4d4"><rect x="4.500" y="4" width="1" height="1"/><rect x="2.500" y="4" width="1" height="1"/><rect x="4.500" y="2" width="1" height="1"/><rect x=".5" y="4" width="1" height="1"/><rect x="2.500" y="2" width="1" height="1"/><rect x="4.500" y="0" width="1" height="1"/></g></svg>
</body>
</html>
